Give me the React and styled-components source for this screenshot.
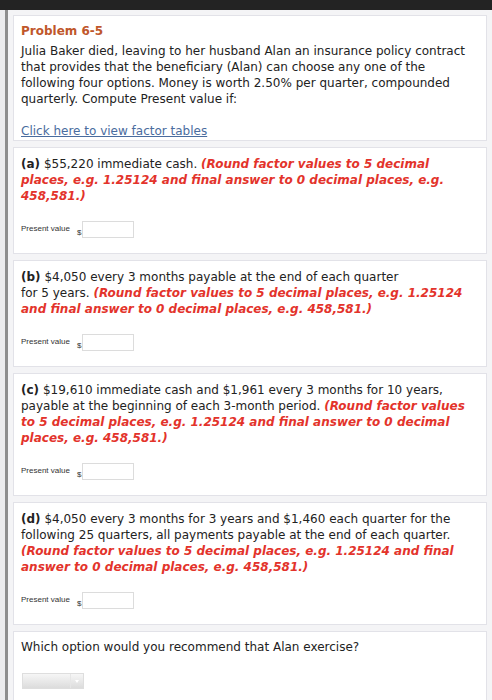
import React from "react";
import styled, { createGlobalStyle } from "styled-components";

const Global = createGlobalStyle`
  html, body {
    margin: 0;
    padding: 0;
    background: #ececee;
  }
  body {
    font-family: "DejaVu Sans", Verdana, sans-serif;
  }
`;

const TopBar = styled.div`
  height: 10px;
  background: #232323;
`;

const Frame = styled.div`
  margin-left: 5px;
  border-left: 3px solid #8e8e8e;
  background: #f4f4f6;
  padding: 5px 5px 0 5px;
  display: flex;
  flex-direction: column;
  gap: 6px;
`;

const Card = styled.div`
  background: #fff;
  border: 1px solid #e2e2e8;
  padding: ${p => p.$pad || "8px 7px 4px 7px"};
  font-size: 12px;
  line-height: 16px;
  color: #222;
`;

const Title = styled.div`
  color: #c0572b;
  font-weight: bold;
  margin-bottom: 4px;
`;

const Para = styled.p`
  margin: 0;
`;

const Link = styled.a`
  display: inline-block;
  margin-top: 16px;
  color: #4a6c9e;
  text-decoration: underline;
`;

const Label = styled.b`
  color: #222;
`;

const Hint = styled.span`
  color: #e3332b;
  font-weight: bold;
  font-style: italic;
`;

const AnswerRow = styled.div`
  display: flex;
  align-items: flex-start;
  margin-top: 17px;
  height: 28px;
  font-family: "Liberation Sans", Arial, sans-serif;
`;

const SmallLabel = styled.span`
  font-size: 8px;
  line-height: 10px;
  color: #333;
  margin-top: 3px;
  width: 56px;
`;

const Dollar = styled.span`
  font-size: 8px;
  line-height: 10px;
  color: #333;
  margin-top: 7px;
  margin-right: 1px;
`;

const Input = styled.div`
  width: 50px;
  height: 15px;
  border: 1px solid #dcdcdc;
  background: #fff;
`;

const Select = styled.div`
  margin-top: 18px;
  margin-left: 1px;
  width: 60px;
  height: 14px;
  display: flex;
  border: 1px solid #dedede;
  background: linear-gradient(#f6f6f6, #dcdcdc);
`;

const SelectBody = styled.div`
  flex: 1;
`;

const SelectArrow = styled.div`
  width: 12px;
  border-left: 1px solid #e6e6e6;
  display: flex;
  align-items: center;
  justify-content: center;
  &::after {
    content: "";
    border-left: 2px solid transparent;
    border-right: 2px solid transparent;
    border-top: 3px solid #fff;
  }
`;

function Answer() {
  return (
    <AnswerRow>
      <SmallLabel>Present value</SmallLabel>
      <Dollar>$</Dollar>
      <Input />
    </AnswerRow>
  );
}

const hint =
  "(Round factor values to 5 decimal places, e.g. 1.25124 and final answer to 0 decimal places, e.g. 458,581.)";

export default function App() {
  return (
    <>
      <Global />
      <TopBar />
      <Frame>
        <Card $pad="7px 7px 1px 7px">
          <Title>Problem 6-5</Title>
          <Para>
            Julia Baker died, leaving to her husband Alan an insurance policy contract
            that provides that the beneficiary (Alan) can choose any one of the
            following four options. Money is worth 2.50% per quarter, compounded
            quarterly. Compute Present value if:
          </Para>
          <Link href="#">Click here to view factor tables</Link>
        </Card>
        <Card>
          <Para>
            <Label>(a)</Label> $55,220 immediate cash. <Hint>{hint}</Hint>
          </Para>
          <Answer />
        </Card>
        <Card>
          <Para>
            <Label>(b)</Label> $4,050 every 3 months payable at the end of each quarter
            <br />
            for 5 years. <Hint>{hint}</Hint>
          </Para>
          <Answer />
        </Card>
        <Card>
          <Para>
            <Label>(c)</Label> $19,610 immediate cash and $1,961 every 3 months for 10 years,
            payable at the beginning of each 3-month period. <Hint>{hint}</Hint>
          </Para>
          <Answer />
        </Card>
        <Card>
          <Para>
            <Label>(d)</Label> $4,050 every 3 months for 3 years and $1,460 each quarter for the
            following 25 quarters, all payments payable at the end of each quarter.{" "}
            <Hint>{hint}</Hint>
          </Para>
          <Answer />
        </Card>
        <Card $pad="7px 7px 40px 7px">
          <Para>Which option would you recommend that Alan exercise?</Para>
          <Select>
            <SelectBody />
            <SelectArrow />
          </Select>
        </Card>
      </Frame>
    </>
  );
}
